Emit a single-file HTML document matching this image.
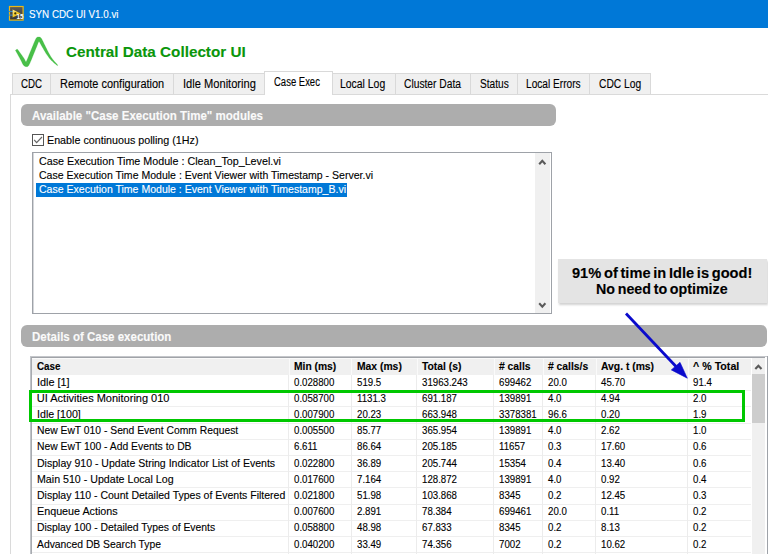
<!DOCTYPE html>
<html><head><meta charset="utf-8"><style>
html,body{margin:0;padding:0;}
body{width:768px;height:554px;overflow:hidden;position:relative;background:#fff;font-family:"Liberation Sans",sans-serif;}
.t{position:absolute;white-space:nowrap;transform-origin:0 0;-webkit-text-stroke:0.12px currentColor;}
.b{position:absolute;}
</style></head><body>
<div class="b" style="left:0px;top:0px;width:768px;height:28px;background:#0078d7;"></div>
<svg class="b" style="left:8px;top:5px" width="17" height="17" viewBox="8 5 17 17">
<defs><linearGradient id="ig" x1="0" y1="0" x2="0" y2="1"><stop offset="0" stop-color="#5c5c5c"/><stop offset="1" stop-color="#353535"/></linearGradient>
<linearGradient id="tg" x1="0" y1="0" x2="1" y2="1"><stop offset="0" stop-color="#fff2a0"/><stop offset="0.5" stop-color="#f2c820"/><stop offset="1" stop-color="#c89a00"/></linearGradient></defs>
<rect x="9.5" y="6.5" width="13.6" height="13.6" fill="url(#ig)" stroke="#e8b818" stroke-width="1.2"/>
<rect x="9" y="11" width="4" height="1" fill="#3a8ad0"/>
<rect x="9" y="14.6" width="4" height="1" fill="#3a8ad0"/>
<path d="M12.6 9.6 L20.8 13.5 L12.6 17.4 Z" fill="url(#tg)"/>
<circle cx="15.3" cy="13.4" r="1.1" fill="#3a3000"/>
<text x="16.4" y="19.4" font-family="Liberation Sans" font-size="6.4" font-weight="bold" fill="#ffffff" style="-webkit-text-stroke:0.2px #fff">15</text>
</svg>
<div class="t" style="left:28.50px;top:9.00px;font-size:11px;line-height:11px;color:#fff;transform:scaleX(0.8928);">SYN CDC UI V1.0.vi</div>
<svg class="b" style="left:0px;top:28px" width="70" height="45" viewBox="0 28 70 45"><path d="M15.37 50.19 L15.76 50.97 L16.31 52.01 L16.99 53.25 L17.74 54.59 L18.51 55.98 L19.25 57.32 L19.90 58.54 L20.41 59.55 L20.85 60.34 L21.22 61.07 L21.55 61.73 L21.83 62.35 L22.10 62.92 L22.36 63.48 L22.64 64.02 L22.95 64.53 L23.26 64.96 L23.57 65.33 L23.91 65.68 L24.30 66.01 L24.76 66.29 L25.29 66.49 L25.83 66.59 L26.04 66.59 L25.73 66.52 L25.50 66.43 L26.00 66.67 L27.40 66.65 L28.32 66.04 L28.75 65.48 L29.10 64.87 L29.51 64.06 L30.02 62.95 L30.62 61.54 L31.30 59.92 L32.03 58.15 L32.78 56.32 L33.52 54.51 L34.21 52.80 L34.85 51.26 L35.44 49.81 L36.03 48.34 L36.61 46.89 L37.16 45.50 L37.68 44.20 L38.16 43.04 L38.59 42.04 L38.95 41.26 L39.23 40.70 L39.41 40.38 L39.47 40.29 L39.31 40.43 L38.88 40.64 L38.51 40.70 L38.56 40.70 L38.82 40.70 L38.92 40.68 L38.74 40.64 L38.47 40.53 L38.30 40.41 L38.29 40.38 L38.40 40.50 L38.60 40.76 L38.87 41.15 L39.22 41.67 L39.62 42.34 L40.07 43.13 L40.56 44.00 L41.07 44.93 L41.59 45.88 L42.12 46.83 L42.63 47.73 L43.15 48.61 L43.67 49.51 L44.20 50.42 L44.75 51.34 L45.29 52.26 L45.84 53.16 L46.39 54.03 L46.94 54.86 L47.47 55.62 L47.99 56.35 L48.50 57.04 L49.02 57.72 L49.55 58.38 L50.11 59.04 L50.69 59.71 L51.32 60.39 L52.05 61.10 L52.87 61.86 L53.74 62.64 L54.61 63.40 L55.45 64.11 L56.22 64.75 L56.87 65.27 L57.36 65.65 L57.84 65.15 L57.45 64.67 L56.89 64.04 L56.22 63.31 L55.49 62.50 L54.72 61.65 L53.96 60.80 L53.27 59.97 L52.68 59.21 L52.15 58.51 L51.67 57.83 L51.21 57.16 L50.78 56.48 L50.36 55.79 L49.94 55.08 L49.51 54.33 L49.06 53.54 L48.60 52.72 L48.14 51.85 L47.67 50.94 L47.20 50.01 L46.74 49.06 L46.27 48.11 L45.81 47.18 L45.37 46.27 L44.92 45.36 L44.46 44.41 L44.00 43.44 L43.54 42.47 L43.10 41.55 L42.68 40.69 L42.29 39.91 L41.93 39.25 L41.61 38.73 L41.32 38.30 L41.02 37.92 L40.65 37.54 L40.15 37.21 L39.57 36.98 L39.05 36.91 L38.78 36.90 L38.67 36.89 L38.41 36.88 L37.75 36.97 L37.02 37.33 L36.51 37.80 L36.15 38.29 L35.82 38.84 L35.45 39.54 L35.02 40.43 L34.55 41.50 L34.04 42.70 L33.50 44.01 L32.93 45.41 L32.35 46.85 L31.75 48.30 L31.15 49.74 L30.51 51.28 L29.81 53.00 L29.07 54.81 L28.33 56.64 L27.61 58.38 L26.94 59.98 L26.36 61.32 L25.89 62.34 L25.56 63.00 L25.37 63.33 L25.41 63.30 L26.03 62.89 L27.20 62.85 L27.49 62.96 L27.00 62.73 L26.36 62.61 L26.19 62.61 L26.37 62.64 L26.54 62.71 L26.64 62.77 L26.65 62.77 L26.57 62.69 L26.43 62.52 L26.25 62.27 L26.04 61.98 L25.82 61.63 L25.57 61.17 L25.28 60.63 L24.95 60.00 L24.56 59.29 L24.11 58.51 L23.59 57.65 L22.89 56.69 L22.07 55.55 L21.16 54.30 L20.23 53.01 L19.32 51.76 L18.48 50.62 L17.77 49.68 L17.23 49.01 Z" fill="#48bf48" stroke="#48bf48" stroke-width="0.2" stroke-linejoin="round"/></svg>
<div class="t" style="left:65.70px;top:43.50px;font-size:15.5px;line-height:15.5px;color:#0a960a;font-weight:bold;transform:scaleX(0.9841);">Central Data Collector UI</div>
<div class="b" style="left:10px;top:94px;width:758px;height:1px;background:#dadada;"></div>
<div class="b" style="left:10px;top:94px;width:1px;height:460px;background:#dadada;"></div>
<div class="b" style="left:12px;top:73px;width:39px;height:21px;background:#f0f0f0;border:1px solid #d9d9d9;border-bottom:none;box-sizing:border-box;"></div>
<div class="t" style="left:20.60px;top:78.00px;font-size:12px;line-height:12px;color:#000;transform:scaleX(0.8116);">CDC</div>
<div class="b" style="left:50px;top:73px;width:124px;height:21px;background:#f0f0f0;border:1px solid #d9d9d9;border-bottom:none;box-sizing:border-box;"></div>
<div class="t" style="left:60.40px;top:78.00px;font-size:12px;line-height:12px;color:#000;transform:scaleX(0.9135);">Remote configuration</div>
<div class="b" style="left:173px;top:73px;width:92px;height:21px;background:#f0f0f0;border:1px solid #d9d9d9;border-bottom:none;box-sizing:border-box;"></div>
<div class="t" style="left:183.40px;top:78.00px;font-size:12px;line-height:12px;color:#000;transform:scaleX(0.9262);">Idle Monitoring</div>
<div class="b" style="left:332px;top:73px;width:64px;height:21px;background:#f0f0f0;border:1px solid #d9d9d9;border-bottom:none;box-sizing:border-box;"></div>
<div class="t" style="left:340.00px;top:78.00px;font-size:12px;line-height:12px;color:#000;transform:scaleX(0.8685);">Local Log</div>
<div class="b" style="left:395px;top:73px;width:76px;height:21px;background:#f0f0f0;border:1px solid #d9d9d9;border-bottom:none;box-sizing:border-box;"></div>
<div class="t" style="left:404.00px;top:78.00px;font-size:12px;line-height:12px;color:#000;transform:scaleX(0.8547);">Cluster Data</div>
<div class="b" style="left:470px;top:73px;width:48px;height:21px;background:#f0f0f0;border:1px solid #d9d9d9;border-bottom:none;box-sizing:border-box;"></div>
<div class="t" style="left:479.50px;top:78.00px;font-size:12px;line-height:12px;color:#000;transform:scaleX(0.8436);">Status</div>
<div class="b" style="left:517px;top:73px;width:73px;height:21px;background:#f0f0f0;border:1px solid #d9d9d9;border-bottom:none;box-sizing:border-box;"></div>
<div class="t" style="left:526.40px;top:78.00px;font-size:12px;line-height:12px;color:#000;transform:scaleX(0.8441);">Local Errors</div>
<div class="b" style="left:589px;top:73px;width:62px;height:21px;background:#f0f0f0;border:1px solid #d9d9d9;border-bottom:none;box-sizing:border-box;"></div>
<div class="t" style="left:599.30px;top:78.00px;font-size:12px;line-height:12px;color:#000;transform:scaleX(0.8551);">CDC Log</div>
<div class="b" style="left:264px;top:71px;width:69px;height:24px;background:#fff;border:1px solid #d9d9d9;border-bottom:none;box-sizing:border-box;"></div>
<div class="t" style="left:273.80px;top:75.50px;font-size:12px;line-height:12px;color:#000;transform:scaleX(0.7910);">Case Exec</div>
<div class="b" style="left:21px;top:104px;width:535px;height:22px;background:#adadad;border-radius:6px;"></div>
<div class="t" style="left:31.80px;top:110.00px;font-size:12px;line-height:12px;color:#fafafa;font-weight:bold;transform:scaleX(0.9620);">Available &quot;Case Execution Time&quot; modules</div>
<div class="b" style="left:32px;top:134px;width:12px;height:12px;border:1px solid #555;box-sizing:border-box;background:#fff;"></div>
<svg class="b" style="left:32px;top:134px" width="12" height="12" viewBox="0 0 12 12">
<path d="M2.2 5.8 L4.6 8.6 L10 3" fill="none" stroke="#666" stroke-width="1.2"/></svg>
<div class="t" style="left:46.50px;top:135.30px;font-size:11px;line-height:11px;color:#000;transform:scaleX(0.9754);">Enable continuous polling (1Hz)</div>
<div class="b" style="left:32px;top:152px;width:520px;height:162px;border:1px solid #9ea2a8;box-sizing:border-box;background:#fff;"></div>
<div class="b" style="left:33px;top:153px;width:1px;height:160px;background:#d4d6da;"></div>
<div class="b" style="left:535px;top:153px;width:15px;height:160px;background:#f0f0f0;"></div>
<svg class="b" style="left:535px;top:153px" width="15" height="160" viewBox="0 0 15 160">
<path d="M4.2 11.2 L7.3 7.9 L10.4 11.2" fill="none" stroke="#5a5a5a" stroke-width="2.1"/>
<path d="M4.2 150.3 L7.3 153.6 L10.4 150.3" fill="none" stroke="#5a5a5a" stroke-width="2.1"/></svg>
<div class="b" style="left:36px;top:183px;width:311px;height:14px;background:#0078d7;"></div>
<div class="t" style="left:39.00px;top:156.00px;font-size:11px;line-height:11px;color:#000;transform:scaleX(0.9748);">Case Execution Time Module : Clean_Top_Level.vi</div>
<div class="t" style="left:39.00px;top:170.00px;font-size:11px;line-height:11px;color:#000;transform:scaleX(0.9573);">Case Execution Time Module : Event Viewer with Timestamp - Server.vi</div>
<div class="t" style="left:39.00px;top:184.00px;font-size:11px;line-height:11px;color:#fff;transform:scaleX(0.9571);">Case Execution Time Module : Event Viewer with Timestamp_B.vi</div>
<div class="b" style="left:558px;top:259px;width:209px;height:44px;background:#e4e4e4;box-shadow:1px 2px 2px rgba(0,0,0,0.18);"></div>
<div class="t" style="left:572.00px;top:266.00px;font-size:14.5px;line-height:14.5px;color:#000;font-weight:bold;transform:scaleX(1.0067);word-spacing:-1.3px;">91% of time in Idle is good!</div>
<div class="t" style="left:596.00px;top:281.50px;font-size:14.5px;line-height:14.5px;color:#000;font-weight:bold;transform:scaleX(0.9832);word-spacing:-1.3px;">No need to optimize</div>
<div class="b" style="left:21px;top:325px;width:746px;height:22px;background:#adadad;border-radius:6px;"></div>
<div class="t" style="left:32.30px;top:330.50px;font-size:12px;line-height:12px;color:#fafafa;font-weight:bold;transform:scaleX(0.9588);">Details of Case execution</div>
<div class="b" style="left:30px;top:356px;width:738px;height:200px;border-top:1px solid #c4c6ca;border-left:1px solid #c0c3c8;box-sizing:border-box;background:#fff;"></div>
<div class="b" style="left:31px;top:357px;width:737px;height:200px;border-top:1px solid #a0a3a8;border-left:1px solid #a8abb0;box-sizing:border-box;background:#fff;"></div>
<div class="b" style="left:32px;top:358px;width:719px;height:17px;background:#f0f0f0;"></div>
<div class="b" style="left:32px;top:358px;width:719px;height:1px;background:#fafafa;"></div>
<div class="b" style="left:32px;top:390px;width:719px;height:1px;background:#efefef;"></div>
<div class="b" style="left:32px;top:406px;width:719px;height:1px;background:#efefef;"></div>
<div class="b" style="left:32px;top:423px;width:719px;height:1px;background:#efefef;"></div>
<div class="b" style="left:32px;top:439px;width:719px;height:1px;background:#efefef;"></div>
<div class="b" style="left:32px;top:455px;width:719px;height:1px;background:#efefef;"></div>
<div class="b" style="left:32px;top:471px;width:719px;height:1px;background:#efefef;"></div>
<div class="b" style="left:32px;top:487px;width:719px;height:1px;background:#efefef;"></div>
<div class="b" style="left:32px;top:504px;width:719px;height:1px;background:#efefef;"></div>
<div class="b" style="left:32px;top:520px;width:719px;height:1px;background:#efefef;"></div>
<div class="b" style="left:32px;top:536px;width:719px;height:1px;background:#efefef;"></div>
<div class="b" style="left:32px;top:552px;width:719px;height:1px;background:#efefef;"></div>
<div class="b" style="left:32px;top:568px;width:719px;height:1px;background:#efefef;"></div>
<div class="b" style="left:289px;top:358px;width:1px;height:17px;background:#fafafa;"></div>
<div class="b" style="left:351px;top:358px;width:1px;height:17px;background:#fafafa;"></div>
<div class="b" style="left:417px;top:358px;width:1px;height:17px;background:#fafafa;"></div>
<div class="b" style="left:494px;top:358px;width:1px;height:17px;background:#fafafa;"></div>
<div class="b" style="left:543px;top:358px;width:1px;height:17px;background:#fafafa;"></div>
<div class="b" style="left:596px;top:358px;width:1px;height:17px;background:#fafafa;"></div>
<div class="b" style="left:688px;top:358px;width:1px;height:17px;background:#fafafa;"></div>
<div class="b" style="left:288px;top:375px;width:1px;height:190px;background:#ececec;"></div>
<div class="b" style="left:351px;top:375px;width:1px;height:190px;background:#ececec;"></div>
<div class="b" style="left:416px;top:375px;width:1px;height:190px;background:#ececec;"></div>
<div class="b" style="left:493px;top:375px;width:1px;height:190px;background:#ececec;"></div>
<div class="b" style="left:542px;top:375px;width:1px;height:190px;background:#ececec;"></div>
<div class="b" style="left:595px;top:375px;width:1px;height:190px;background:#ececec;"></div>
<div class="b" style="left:687px;top:375px;width:1px;height:190px;background:#ececec;"></div>
<div class="b" style="left:752px;top:358px;width:13px;height:196px;background:#f0f0f0;"></div>
<div class="b" style="left:752px;top:374px;width:13px;height:49px;background:#cdcdcd;"></div>
<svg class="b" style="left:751px;top:358px" width="16" height="16" viewBox="0 0 16 16">
<path d="M4.3 11 L7.4 7.7 L10.5 11" fill="none" stroke="#5a5a5a" stroke-width="2.1"/></svg>
<div class="b" style="left:765px;top:357px;width:2px;height:197px;background:#fff;"></div>
<div class="b" style="left:767px;top:356px;width:1px;height:198px;background:#9ea2a8;"></div>
<div class="t" style="left:36.80px;top:360.50px;font-size:11px;line-height:11px;color:#000;font-weight:bold;transform:scaleX(0.8936);">Case</div>
<div class="t" style="left:294.20px;top:360.50px;font-size:11px;line-height:11px;color:#000;font-weight:bold;transform:scaleX(0.9332);">Min (ms)</div>
<div class="t" style="left:356.70px;top:360.50px;font-size:11px;line-height:11px;color:#000;font-weight:bold;transform:scaleX(0.9400);">Max (ms)</div>
<div class="t" style="left:421.90px;top:360.50px;font-size:11px;line-height:11px;color:#000;font-weight:bold;transform:scaleX(0.9400);">Total (s)</div>
<div class="t" style="left:498.60px;top:360.50px;font-size:11px;line-height:11px;color:#000;font-weight:bold;transform:scaleX(0.9400);"># calls</div>
<div class="t" style="left:548.00px;top:360.50px;font-size:11px;line-height:11px;color:#000;font-weight:bold;transform:scaleX(0.9400);"># calls/s</div>
<div class="t" style="left:600.90px;top:360.50px;font-size:11px;line-height:11px;color:#000;font-weight:bold;transform:scaleX(0.9400);">Avg. t (ms)</div>
<div class="t" style="left:692.90px;top:360.50px;font-size:11px;line-height:11px;color:#000;font-weight:bold;transform:scaleX(0.9691);">^ % Total</div>
<div class="t" style="left:36.80px;top:376.50px;font-size:11px;line-height:11px;color:#000;transform:scaleX(0.9872);">Idle [1]</div>
<div class="t" style="left:294.20px;top:376.50px;font-size:11px;line-height:11px;color:#000;transform:scaleX(0.8800);">0.028800</div>
<div class="t" style="left:356.70px;top:376.50px;font-size:11px;line-height:11px;color:#000;transform:scaleX(0.8800);">519.5</div>
<div class="t" style="left:421.90px;top:376.50px;font-size:11px;line-height:11px;color:#000;transform:scaleX(0.8800);">31963.243</div>
<div class="t" style="left:498.60px;top:376.50px;font-size:11px;line-height:11px;color:#000;transform:scaleX(0.8800);">699462</div>
<div class="t" style="left:548.00px;top:376.50px;font-size:11px;line-height:11px;color:#000;transform:scaleX(0.8800);">20.0</div>
<div class="t" style="left:600.90px;top:376.50px;font-size:11px;line-height:11px;color:#000;transform:scaleX(0.8800);">45.70</div>
<div class="t" style="left:692.90px;top:376.50px;font-size:11px;line-height:11px;color:#000;transform:scaleX(0.8800);">91.4</div>
<div class="t" style="left:36.80px;top:392.70px;font-size:11px;line-height:11px;color:#000;">UI Activities Monitoring 010</div>
<div class="t" style="left:294.20px;top:392.70px;font-size:11px;line-height:11px;color:#000;transform:scaleX(0.8800);">0.058700</div>
<div class="t" style="left:356.70px;top:392.70px;font-size:11px;line-height:11px;color:#000;transform:scaleX(0.8800);">1131.3</div>
<div class="t" style="left:421.90px;top:392.70px;font-size:11px;line-height:11px;color:#000;transform:scaleX(0.8800);">691.187</div>
<div class="t" style="left:498.60px;top:392.70px;font-size:11px;line-height:11px;color:#000;transform:scaleX(0.8800);">139891</div>
<div class="t" style="left:548.00px;top:392.70px;font-size:11px;line-height:11px;color:#000;transform:scaleX(0.8800);">4.0</div>
<div class="t" style="left:600.90px;top:392.70px;font-size:11px;line-height:11px;color:#000;transform:scaleX(0.8800);">4.94</div>
<div class="t" style="left:692.90px;top:392.70px;font-size:11px;line-height:11px;color:#000;transform:scaleX(0.8800);">2.0</div>
<div class="t" style="left:36.80px;top:408.90px;font-size:11px;line-height:11px;color:#000;transform:scaleX(0.9678);">Idle [100]</div>
<div class="t" style="left:294.20px;top:408.90px;font-size:11px;line-height:11px;color:#000;transform:scaleX(0.8800);">0.007900</div>
<div class="t" style="left:356.70px;top:408.90px;font-size:11px;line-height:11px;color:#000;transform:scaleX(0.8800);">20.23</div>
<div class="t" style="left:421.90px;top:408.90px;font-size:11px;line-height:11px;color:#000;transform:scaleX(0.8800);">663.948</div>
<div class="t" style="left:498.60px;top:408.90px;font-size:11px;line-height:11px;color:#000;transform:scaleX(0.8800);">3378381</div>
<div class="t" style="left:548.00px;top:408.90px;font-size:11px;line-height:11px;color:#000;transform:scaleX(0.8800);">96.6</div>
<div class="t" style="left:600.90px;top:408.90px;font-size:11px;line-height:11px;color:#000;transform:scaleX(0.8800);">0.20</div>
<div class="t" style="left:692.90px;top:408.90px;font-size:11px;line-height:11px;color:#000;transform:scaleX(0.8800);">1.9</div>
<div class="t" style="left:36.80px;top:425.10px;font-size:11px;line-height:11px;color:#000;transform:scaleX(0.9385);">New EwT 010 - Send Event Comm Request</div>
<div class="t" style="left:294.20px;top:425.10px;font-size:11px;line-height:11px;color:#000;transform:scaleX(0.8800);">0.005500</div>
<div class="t" style="left:356.70px;top:425.10px;font-size:11px;line-height:11px;color:#000;transform:scaleX(0.8800);">85.77</div>
<div class="t" style="left:421.90px;top:425.10px;font-size:11px;line-height:11px;color:#000;transform:scaleX(0.8800);">365.954</div>
<div class="t" style="left:498.60px;top:425.10px;font-size:11px;line-height:11px;color:#000;transform:scaleX(0.8800);">139891</div>
<div class="t" style="left:548.00px;top:425.10px;font-size:11px;line-height:11px;color:#000;transform:scaleX(0.8800);">4.0</div>
<div class="t" style="left:600.90px;top:425.10px;font-size:11px;line-height:11px;color:#000;transform:scaleX(0.8800);">2.62</div>
<div class="t" style="left:692.90px;top:425.10px;font-size:11px;line-height:11px;color:#000;transform:scaleX(0.8800);">1.0</div>
<div class="t" style="left:36.80px;top:441.30px;font-size:11px;line-height:11px;color:#000;transform:scaleX(0.9406);">New EwT 100 - Add Events to DB</div>
<div class="t" style="left:294.20px;top:441.30px;font-size:11px;line-height:11px;color:#000;transform:scaleX(0.8800);">6.611</div>
<div class="t" style="left:356.70px;top:441.30px;font-size:11px;line-height:11px;color:#000;transform:scaleX(0.8800);">86.64</div>
<div class="t" style="left:421.90px;top:441.30px;font-size:11px;line-height:11px;color:#000;transform:scaleX(0.8800);">205.185</div>
<div class="t" style="left:498.60px;top:441.30px;font-size:11px;line-height:11px;color:#000;transform:scaleX(0.8800);">11657</div>
<div class="t" style="left:548.00px;top:441.30px;font-size:11px;line-height:11px;color:#000;transform:scaleX(0.8800);">0.3</div>
<div class="t" style="left:600.90px;top:441.30px;font-size:11px;line-height:11px;color:#000;transform:scaleX(0.8800);">17.60</div>
<div class="t" style="left:692.90px;top:441.30px;font-size:11px;line-height:11px;color:#000;transform:scaleX(0.8800);">0.6</div>
<div class="t" style="left:36.80px;top:457.50px;font-size:11px;line-height:11px;color:#000;transform:scaleX(0.9568);">Display 910 - Update String Indicator List of Events</div>
<div class="t" style="left:294.20px;top:457.50px;font-size:11px;line-height:11px;color:#000;transform:scaleX(0.8800);">0.022800</div>
<div class="t" style="left:356.70px;top:457.50px;font-size:11px;line-height:11px;color:#000;transform:scaleX(0.8800);">36.89</div>
<div class="t" style="left:421.90px;top:457.50px;font-size:11px;line-height:11px;color:#000;transform:scaleX(0.8800);">205.744</div>
<div class="t" style="left:498.60px;top:457.50px;font-size:11px;line-height:11px;color:#000;transform:scaleX(0.8800);">15354</div>
<div class="t" style="left:548.00px;top:457.50px;font-size:11px;line-height:11px;color:#000;transform:scaleX(0.8800);">0.4</div>
<div class="t" style="left:600.90px;top:457.50px;font-size:11px;line-height:11px;color:#000;transform:scaleX(0.8800);">13.40</div>
<div class="t" style="left:692.90px;top:457.50px;font-size:11px;line-height:11px;color:#000;transform:scaleX(0.8800);">0.6</div>
<div class="t" style="left:36.80px;top:473.70px;font-size:11px;line-height:11px;color:#000;transform:scaleX(0.9670);">Main 510 - Update Local Log</div>
<div class="t" style="left:294.20px;top:473.70px;font-size:11px;line-height:11px;color:#000;transform:scaleX(0.8800);">0.017600</div>
<div class="t" style="left:356.70px;top:473.70px;font-size:11px;line-height:11px;color:#000;transform:scaleX(0.8800);">7.164</div>
<div class="t" style="left:421.90px;top:473.70px;font-size:11px;line-height:11px;color:#000;transform:scaleX(0.8800);">128.872</div>
<div class="t" style="left:498.60px;top:473.70px;font-size:11px;line-height:11px;color:#000;transform:scaleX(0.8800);">139891</div>
<div class="t" style="left:548.00px;top:473.70px;font-size:11px;line-height:11px;color:#000;transform:scaleX(0.8800);">4.0</div>
<div class="t" style="left:600.90px;top:473.70px;font-size:11px;line-height:11px;color:#000;transform:scaleX(0.8800);">0.92</div>
<div class="t" style="left:692.90px;top:473.70px;font-size:11px;line-height:11px;color:#000;transform:scaleX(0.8800);">0.4</div>
<div class="t" style="left:36.80px;top:489.90px;font-size:11px;line-height:11px;color:#000;transform:scaleX(0.9548);">Display 110 - Count Detailed Types of Events Filtered</div>
<div class="t" style="left:294.20px;top:489.90px;font-size:11px;line-height:11px;color:#000;transform:scaleX(0.8800);">0.021800</div>
<div class="t" style="left:356.70px;top:489.90px;font-size:11px;line-height:11px;color:#000;transform:scaleX(0.8800);">51.98</div>
<div class="t" style="left:421.90px;top:489.90px;font-size:11px;line-height:11px;color:#000;transform:scaleX(0.8800);">103.868</div>
<div class="t" style="left:498.60px;top:489.90px;font-size:11px;line-height:11px;color:#000;transform:scaleX(0.8800);">8345</div>
<div class="t" style="left:548.00px;top:489.90px;font-size:11px;line-height:11px;color:#000;transform:scaleX(0.8800);">0.2</div>
<div class="t" style="left:600.90px;top:489.90px;font-size:11px;line-height:11px;color:#000;transform:scaleX(0.8800);">12.45</div>
<div class="t" style="left:692.90px;top:489.90px;font-size:11px;line-height:11px;color:#000;transform:scaleX(0.8800);">0.3</div>
<div class="t" style="left:36.80px;top:506.10px;font-size:11px;line-height:11px;color:#000;transform:scaleX(0.9774);">Enqueue Actions</div>
<div class="t" style="left:294.20px;top:506.10px;font-size:11px;line-height:11px;color:#000;transform:scaleX(0.8800);">0.007600</div>
<div class="t" style="left:356.70px;top:506.10px;font-size:11px;line-height:11px;color:#000;transform:scaleX(0.8800);">2.891</div>
<div class="t" style="left:421.90px;top:506.10px;font-size:11px;line-height:11px;color:#000;transform:scaleX(0.8800);">78.384</div>
<div class="t" style="left:498.60px;top:506.10px;font-size:11px;line-height:11px;color:#000;transform:scaleX(0.8800);">699461</div>
<div class="t" style="left:548.00px;top:506.10px;font-size:11px;line-height:11px;color:#000;transform:scaleX(0.8800);">20.0</div>
<div class="t" style="left:600.90px;top:506.10px;font-size:11px;line-height:11px;color:#000;transform:scaleX(0.8800);">0.11</div>
<div class="t" style="left:692.90px;top:506.10px;font-size:11px;line-height:11px;color:#000;transform:scaleX(0.8800);">0.2</div>
<div class="t" style="left:36.80px;top:522.30px;font-size:11px;line-height:11px;color:#000;transform:scaleX(0.9442);">Display 100 - Detailed Types of Events</div>
<div class="t" style="left:294.20px;top:522.30px;font-size:11px;line-height:11px;color:#000;transform:scaleX(0.8800);">0.058800</div>
<div class="t" style="left:356.70px;top:522.30px;font-size:11px;line-height:11px;color:#000;transform:scaleX(0.8800);">48.98</div>
<div class="t" style="left:421.90px;top:522.30px;font-size:11px;line-height:11px;color:#000;transform:scaleX(0.8800);">67.833</div>
<div class="t" style="left:498.60px;top:522.30px;font-size:11px;line-height:11px;color:#000;transform:scaleX(0.8800);">8345</div>
<div class="t" style="left:548.00px;top:522.30px;font-size:11px;line-height:11px;color:#000;transform:scaleX(0.8800);">0.2</div>
<div class="t" style="left:600.90px;top:522.30px;font-size:11px;line-height:11px;color:#000;transform:scaleX(0.8800);">8.13</div>
<div class="t" style="left:692.90px;top:522.30px;font-size:11px;line-height:11px;color:#000;transform:scaleX(0.8800);">0.2</div>
<div class="t" style="left:36.80px;top:538.50px;font-size:11px;line-height:11px;color:#000;transform:scaleX(0.9403);">Advanced DB Search Type</div>
<div class="t" style="left:294.20px;top:538.50px;font-size:11px;line-height:11px;color:#000;transform:scaleX(0.8800);">0.040200</div>
<div class="t" style="left:356.70px;top:538.50px;font-size:11px;line-height:11px;color:#000;transform:scaleX(0.8800);">33.49</div>
<div class="t" style="left:421.90px;top:538.50px;font-size:11px;line-height:11px;color:#000;transform:scaleX(0.8800);">74.356</div>
<div class="t" style="left:498.60px;top:538.50px;font-size:11px;line-height:11px;color:#000;transform:scaleX(0.8800);">7002</div>
<div class="t" style="left:548.00px;top:538.50px;font-size:11px;line-height:11px;color:#000;transform:scaleX(0.8800);">0.2</div>
<div class="t" style="left:600.90px;top:538.50px;font-size:11px;line-height:11px;color:#000;transform:scaleX(0.8800);">10.62</div>
<div class="t" style="left:692.90px;top:538.50px;font-size:11px;line-height:11px;color:#000;transform:scaleX(0.8800);">0.2</div>
<div class="b" style="left:29px;top:390px;width:716px;height:32px;border:3px solid #00c800;box-sizing:border-box;"></div>
<svg class="b" style="left:0;top:0" width="768" height="554" viewBox="0 0 768 554">
<line x1="626" y1="313.5" x2="676" y2="366.5" stroke="#0a0acc" stroke-width="2.8"/>
<path d="M687.3 378.2 L671.3 369.9 L680 362.3 Z" fill="#0a0acc" stroke="#0a0acc" stroke-width="0.6" stroke-linejoin="round"/>
</svg>
</body></html>
